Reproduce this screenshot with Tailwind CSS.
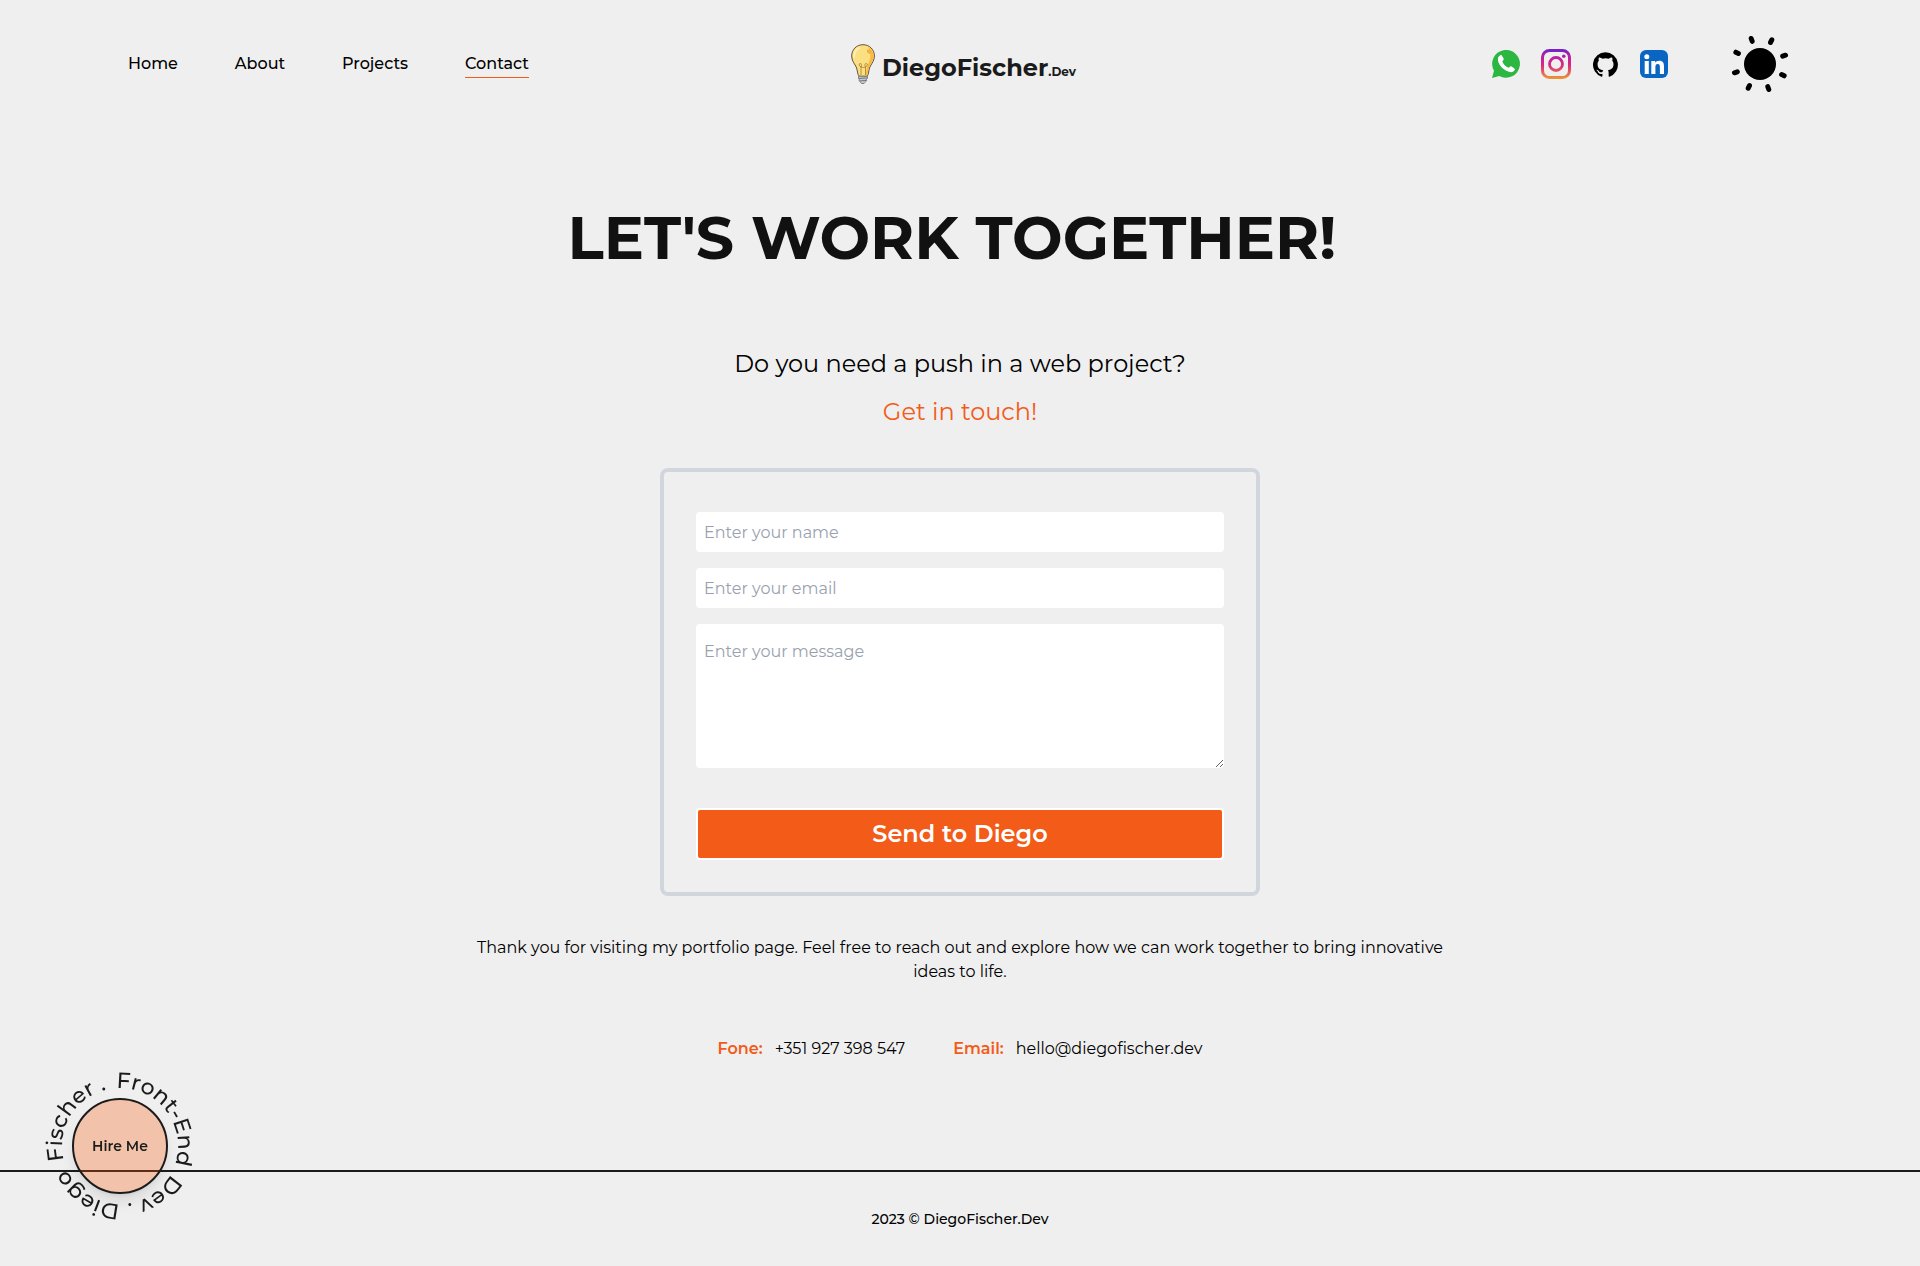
<!DOCTYPE html>
<html lang="en">
<head>
    <meta charset="UTF-8">
    <meta name="viewport" content="width=device-width, initial-scale=1.0">
    <title>DiegoFischer.Dev | Contact</title>
    <script src="https://cdn.jsdelivr.net/npm/@tailwindcss/browser@4"></script>
</head>
<body class="bg-[#efefef] text-black font-[Montserrat,Inter,sans-serif]">

    <div class="min-h-screen flex flex-col">

        <!-- Header -->
        <header class="w-full h-32 px-32 grid grid-cols-[1fr_auto_1fr] items-center">
            <nav class="flex items-center gap-[57px] text-base font-medium">
                <a href="#home">Home</a>
                <a href="#about">About</a>
                <a href="#projects">Projects</a>
                <a href="#contact" class="relative">Contact<span class="absolute left-0 -bottom-0.5 w-full h-px bg-[#f35b19]"></span></a>
            </nav>

            <a href="#home" class="flex items-center gap-[7px] pl-[7px] text-[#1b1b1b]">
                <svg class="w-6 h-10" viewBox="0 0 24 40" fill="none">
                    <path d="M12 .7C5.500.7.7 5.500.7 12c0 4.500 2.300 7 4 10 1.500 2.700 1.400 5 2.400 8.500.3 1.300 1.300 1.800 2.500 1.800h5c1.300 0 2.200-.6 2.500-1.800 1-3.500.7-5.800 2.300-8.500 1.700-3 4-5.600 4-10C23.400 5.500 18.500.7 12 .7Z" fill="#fbe083" stroke="#4d4030" stroke-width=".9"/>
                    <path d="M17 2.500c3.500 2 5.700 5.300 5.700 9.500 0 4.200-2.300 6.800-4 9.800-1.400 2.700-1.400 5-2.300 8.400-.3.900-.8 1.400-1.900 1.400 1.300-5.600.9-8.600 3-12.600 2.600-4.500 2.400-10.500-.5-16.500Z" fill="#fbb944"/>
                    <path d="M16 5.500c2.500-.2 4 1 4 3s-3 1.500-4-.5" fill="#fbb030"/>
                    <path d="M3.200 13c-.2-4 1.800-7.500 5-9" stroke="#fff3bd" stroke-width="1.500" stroke-linecap="round"/>
                    <path d="M10 31V23c-2-.8-2.500-3-1-3.500 1.500-.4 2 1.800 1 3.500 2 .6 3 .6 4.500 0-1.200-1.700-.5-3.900 1-3.500 1.500.5.800 2.700-1 3.500v8" stroke="#a8782c" stroke-width=".8"/>
                    <path d="M7.500 32.300h9v2l-1 1v1.500l-1.500 1.500-1 1.200h-2.500l-1-1.200-1.300-1.500v-1.500l-.7-1Z" fill="#c5c9cc" stroke="#5c6266" stroke-width=".7"/>
                    <path d="m7.800 34.500 8.200-.6M8.600 37l6.700-.7" stroke="#5c6266" stroke-width=".8"/>
                </svg>
                <span class="text-2xl font-bold pt-2">DiegoFischer<span class="text-xs">.Dev</span></span>
            </a>

            <div class="flex items-center justify-end">
                <div class="flex items-center gap-[21px]">
                    <a href="#whatsapp" aria-label="WhatsApp">
                        <svg class="w-7 h-7" viewBox="0 0 28 28">
                            <path d="M0 28l2-7.200A13.900 13.900 0 1 1 7.300 26L0 28Z" fill="#2cb742"/>
                            <path d="M8.200 5.300c.7-.4 1.400-.3 1.800.4l1.600 2.900c.3.600.2 1.100-.3 1.600l-1 1c.8 2.900 3.400 5.600 6.400 6.600l1.300-1.100c.5-.4 1-.5 1.600-.1l2.800 1.800c.6.500.7 1.100.3 1.700-1.200 2.100-3.300 2.500-5.700 1.700C11.400 20 7 15.500 6 10.400c-.4-2.200.3-4.100 2.200-5.100Z" fill="#fff"/>
                        </svg>
                    </a>
                    <a href="#instagram" aria-label="Instagram">
                        <svg class="w-[30px] h-[30px]" viewBox="0 0 30 30" fill="none">
                            <defs>
                                <linearGradient id="insta" x1="0" y1="0" x2="0" y2="30" gradientUnits="userSpaceOnUse">
                                    <stop offset="0" stop-color="#6a25c9"/>
                                    <stop offset=".25" stop-color="#b81fa5"/>
                                    <stop offset=".55" stop-color="#dc2a7d"/>
                                    <stop offset="1" stop-color="#ea9a35"/>
                                </linearGradient>
                            </defs>
                            <rect x="1.500" y="1.500" width="27" height="27" rx="7" stroke="url(#insta)" stroke-width="3"/>
                            <circle cx="15" cy="15" r="6.500" stroke="url(#insta)" stroke-width="2.800"/>
                            <circle cx="22.800" cy="7.300" r="1.800" fill="url(#insta)"/>
                        </svg>
                    </a>
                    <a href="#github" aria-label="GitHub" class="mx-px">
                        <svg class="w-[25px] h-[25px]" viewBox="0 0 16 16">
                            <path d="M8 .2a8 8 0 0 0-2.530 15.590c.4.070.550-.170.550-.380l-.010-1.490C4 14.400 3.480 13.400 3.320 12.950c-.090-.230-.480-.940-.820-1.130-.280-.150-.680-.520-.010-.530.630-.010 1.080.580 1.230.820.720 1.210 1.870.870 2.330.660.070-.520.280-.870.510-1.070-1.780-.2-3.640-.890-3.640-3.950 0-.870.310-1.590.820-2.150-.080-.2-.360-1.020.080-2.120 0 0 .670-.210 2.200.820a7.500 7.500 0 0 1 4 0c1.530-1.040 2.200-.820 2.200-.820.440 1.100.160 1.920.080 2.120.510.560.820 1.270.820 2.150 0 3.070-1.870 3.750-3.650 3.950.290.250.540.730.540 1.480l-.010 2.200c0 .210.150.460.550.380A8 8 0 0 0 8 .2Z"/>
                        </svg>
                    </a>
                    <a href="#linkedin" aria-label="LinkedIn">
                        <svg class="w-7 h-7" viewBox="0 0 28 28">
                            <rect width="28" height="28" rx="6" fill="#0a66c2"/>
                            <g fill="#fff">
                                <circle cx="6.800" cy="6.700" r="2.500"/>
                                <path d="M4.700 11h4.100v13H4.700ZM11.300 11h3.900v1.800c.7-1.200 2.100-2.100 4.100-2.100 3.900 0 4.700 2.500 4.700 6V24h-4.100v-6.400c0-1.700-.1-3.500-2.200-3.500s-2.300 1.700-2.300 3.400V24h-4.100Z"/>
                            </g>
                        </svg>
                    </a>
                </div>
                <button type="button" aria-label="Toggle theme" class="ml-15">
                    <svg class="w-16 h-16" viewBox="-32 -32 64 64">
                        <circle r="16"/>
                        <g transform="rotate(-19)" stroke="#000" stroke-width="5" stroke-linecap="round">
                            <path d="M0-24v-3M0 24v3M-24 0h-3M24 0h3M17-17l2-2M-17-17l-2-2M17 17l2 2M-17 17l-2 2"/>
                        </g>
                    </svg>
                </button>
            </div>
        </header>

        <!-- Main Content -->
        <main class="flex-grow flex flex-col items-center text-center pt-20">
            <h1 class="text-6xl font-bold text-[#111] pr-4">LET'S WORK TOGETHER!</h1>

            <p class="mt-20 text-2xl">Do you need a push in a web project?</p>
            <p class="mt-4 text-2xl text-[#f35b19]">Get in touch!</p>

            <form class="mt-10 w-full max-w-[600px] px-8 pt-10 pb-8 flex flex-col gap-4 border-4 border-gray-300 rounded-lg">
                <input type="text" name="name" aria-label="Name" placeholder="Enter your name" class="h-10 px-2 bg-white rounded text-base placeholder:text-gray-400">
                <input type="email" name="email" aria-label="Email" placeholder="Enter your email" class="h-10 px-2 bg-white rounded text-base placeholder:text-gray-400">
                <textarea name="message" aria-label="Message" placeholder="Enter your message" class="h-36 px-2 py-4 bg-white rounded text-base placeholder:text-gray-400"></textarea>
                <button type="submit" class="mt-6 h-[52px] bg-[#f35b19] text-white text-2xl font-semibold border-2 border-white rounded">Send to Diego</button>
            </form>

            <p class="mt-10 w-full max-w-[980px] text-base">Thank you for visiting my portfolio page. Feel free to reach out and explore how we can work together to bring innovative ideas to life.</p>

            <div class="mt-[53px] flex gap-12 text-base">
                <p class="flex gap-3"><span class="font-semibold text-[#f35b19]">Fone:</span>+351 927 398 547</p>
                <p class="flex gap-3"><span class="font-semibold text-[#f35b19]">Email:</span><a href="mailto:hello@diegofischer.dev">hello@diegofischer.dev</a></p>
            </div>
        </main>

        <!-- Footer -->
        <footer class="border-t-2 border-[#1b1b1b] h-24 flex items-center justify-center text-sm font-medium">
            2023 © DiegoFischer.Dev
        </footer>

    </div>

    <!-- Hire me badge -->
    <div class="fixed left-10 bottom-10 w-40 h-40 flex items-center justify-center">
        <svg class="absolute inset-0 w-40 h-40 text-[22px] font-medium" viewBox="-80 -80 160 160" fill="#1b1b1b">
            <path id="ring" d="M0 58A58 58 0 0 1 0-58A58 58 0 0 1 0 58" fill="none"/>
            <text><textPath href="#ring" startOffset="0%">Diego</textPath></text>
            <text><textPath href="#ring" startOffset="21%">Fischer .</textPath></text>
            <text><textPath href="#ring" startOffset="49%">Front-End</textPath></text>
            <text><textPath href="#ring" startOffset="83%">Dev .</textPath></text>
        </svg>
        <a href="mailto:hello@diegofischer.dev" class="relative w-24 h-24 flex items-center justify-center rounded-full border-2 border-[#1b1b1b] bg-[#fa5c0a]/30 shadow-lg text-sm font-semibold text-[#1b1b1b]">Hire Me</a>
    </div>

</body>
</html>
